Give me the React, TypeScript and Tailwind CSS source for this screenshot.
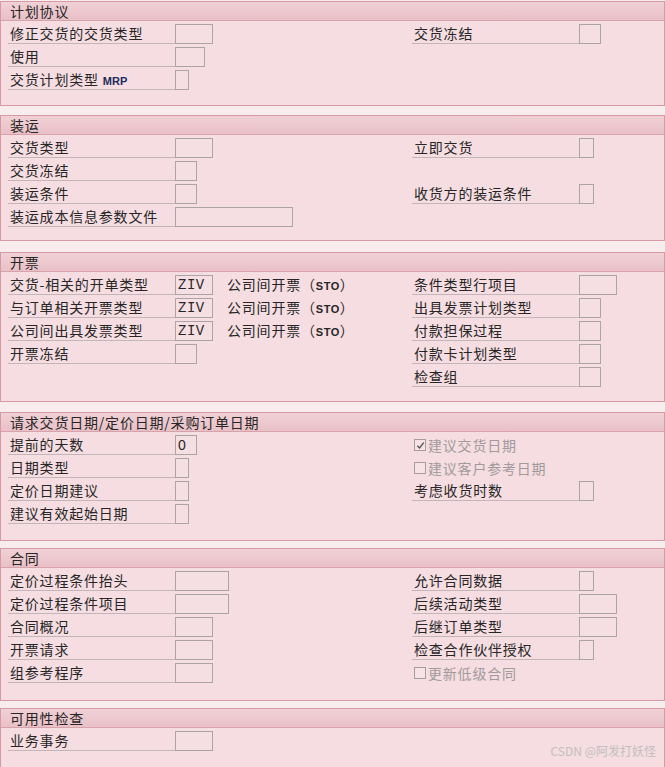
import React from "react";

type Item =
  | { kind: "field"; label: string; w: string; value?: string; mono?: boolean; extra?: string; suffix?: string }
  | { kind: "check"; label: string; checked: boolean };

type Section = {
  title: string;
  h: string;
  mt: string;
  left: Item[];
  right: Item[];
  last?: boolean;
};

const f = (label: string, w: string, more: Partial<Extract<Item, { kind: "field" }>> = {}): Item => ({
  kind: "field",
  label,
  w,
  ...more,
});
const c = (label: string, checked: boolean): Item => ({ kind: "check", label, checked });

const sections: Section[] = [
  {
    title: "计划协议",
    h: "h-[105px]",
    mt: "mt-0",
    left: [f("修正交货的交货类型", "w-[38px]"), f("使用", "w-[30px]"), f("交货计划类型", "w-[14px]", { suffix: "MRP" })],
    right: [f("交货冻结", "w-[22px]")],
  },
  {
    title: "装运",
    h: "h-[126px]",
    mt: "mt-[9px]",
    left: [
      f("交货类型", "w-[38px]"),
      f("交货冻结", "w-[22px]"),
      f("装运条件", "w-[22px]"),
      f("装运成本信息参数文件", "w-[118px]"),
    ],
    right: [f("立即交货", "w-[15px]"), { kind: "field", label: "", w: "hidden" }, f("收货方的装运条件", "w-[15px]")],
  },
  {
    title: "开票",
    h: "h-[150px]",
    mt: "mt-[11px]",
    left: [
      f("交货-相关的开单类型", "w-[38px]", { value: "ZIV", mono: true, extra: "公司间开票" }),
      f("与订单相关开票类型", "w-[38px]", { value: "ZIV", mono: true, extra: "公司间开票" }),
      f("公司间出具发票类型", "w-[38px]", { value: "ZIV", mono: true, extra: "公司间开票" }),
      f("开票冻结", "w-[22px]"),
    ],
    right: [
      f("条件类型行项目", "w-[38px]"),
      f("出具发票计划类型", "w-[22px]"),
      f("付款担保过程", "w-[22px]"),
      f("付款卡计划类型", "w-[22px]"),
      f("检查组", "w-[22px]"),
    ],
  },
  {
    title: "请求交货日期/定价日期/采购订单日期",
    h: "h-[129px]",
    mt: "mt-[10px]",
    left: [
      f("提前的天数", "w-[22px]", { value: "0" }),
      f("日期类型", "w-[14px]"),
      f("定价日期建议", "w-[14px]"),
      f("建议有效起始日期", "w-[14px]"),
    ],
    right: [c("建议交货日期", true), c("建议客户参考日期", false), f("考虑收货时数", "w-[15px]")],
  },
  {
    title: "合同",
    h: "h-[153px]",
    mt: "mt-[7px]",
    left: [
      f("定价过程条件抬头", "w-[54px]"),
      f("定价过程条件项目", "w-[54px]"),
      f("合同概况", "w-[38px]"),
      f("开票请求", "w-[38px]"),
      f("组参考程序", "w-[38px]"),
    ],
    right: [
      f("允许合同数据", "w-[15px]"),
      f("后续活动类型", "w-[38px]"),
      f("后继订单类型", "w-[38px]"),
      f("检查合作伙伴授权", "w-[15px]"),
      c("更新低级合同", false),
    ],
  },
  {
    title: "可用性检查",
    h: "h-[60px]",
    mt: "mt-[7px]",
    left: [f("业务事务", "w-[38px]")],
    right: [],
    last: true,
  },
];

const Row: React.FC<{ item: Item }> = ({ item }) => {
  if (item.kind === "check") {
    return (
      <div className="flex h-[20px] items-center pl-[2px]">
        <span className="flex h-[12px] w-[12px] items-center justify-center border border-[#a49c9e] bg-[#f7e3e6]">
          {item.checked && (
            <svg viewBox="0 0 10 10" className="h-[9px] w-[9px]">
              <path d="M1.5 5.2 L4 7.8 L8.6 1.8" fill="none" stroke="#555" strokeWidth="1.6" />
            </svg>
          )}
        </span>
        <span className="ml-[2px] text-[14px] leading-[19px] tracking-[0.8px] text-[#a19a9c]">{item.label}</span>
      </div>
    );
  }
  if (item.w === "hidden") return <div className="h-[20px]" />;
  return (
    <div className="flex h-[20px]">
      <div className="w-[167px] border-b border-[#c2b6b8] pl-[2px] text-[14px] leading-[19px] tracking-[0.8px] text-[#262626]">
        {item.label}
        {item.suffix && (
          <span className="ml-[4px] font-['Liberation_Sans',sans-serif] text-[11px] font-bold tracking-normal text-[#1d2a5c]">
            {item.suffix}
          </span>
        )}
      </div>
      <div
        className={`${item.w} h-[20px] border border-[#aba4a6] bg-[#f6dfe3] pl-[2px] text-[14px] leading-[18px] text-[#262626] ${
          item.mono ? "font-['Liberation_Mono',monospace] tracking-[0.5px]" : "font-['Liberation_Sans',sans-serif]"
        }`}
      >
        {item.value}
      </div>
      {item.extra && (
        <div className="ml-[14px] text-[14px] leading-[19px] tracking-[0.8px] text-[#262626]">
          {item.extra}
          <span>（</span>
          <span className="font-['Liberation_Sans',sans-serif] text-[11px] font-bold tracking-[0.5px]">STO</span>
          <span>）</span>
        </div>
      )}
    </div>
  );
};

export default function App() {
  return (
    <div className="h-[767px] w-[665px] overflow-hidden bg-[#f8ecef] pt-[1px] font-['Noto_Sans_CJK_SC',sans-serif]">
      {sections.map((s) => (
        <div
          key={s.title}
          className={`${s.h} ${s.mt} relative flex flex-col border border-[#d59aa4] bg-[#f5dde1] ${s.last ? "border-b-0" : ""}`}
        >
          <div className="h-[19px] border-b border-[#d8a2ab] bg-gradient-to-b from-[#f0d1d6] to-[#e9c0c7] pl-[9px] text-[14px] leading-[18px] tracking-[0.8px] text-[#262626]">
            {s.title}
          </div>
          <div className="grid grid-cols-[404px_1fr] pl-[7px] pt-[3px]">
            <div className="flex flex-col gap-[3px]">
              {s.left.map((it, i) => (
                <Row key={i} item={it} />
              ))}
            </div>
            <div className="flex flex-col gap-[3px]">
              {s.right.map((it, i) => (
                <Row key={i} item={it} />
              ))}
            </div>
          </div>
          {s.last && (
            <div className="absolute bottom-[8px] right-[8px] text-[12px] text-[#c3bdbf]">CSDN @阿发打妖怪</div>
          )}
        </div>
      ))}
    </div>
  );
}
